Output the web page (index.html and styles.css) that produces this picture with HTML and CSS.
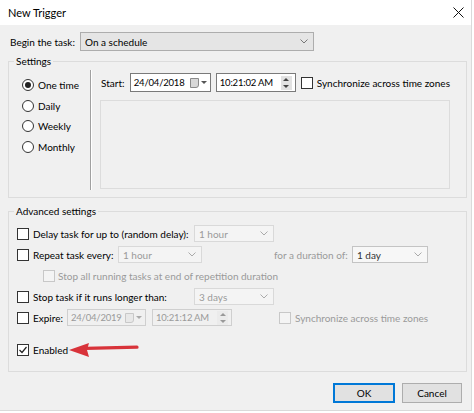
FILE: index.html
```html
<!DOCTYPE html>
<html lang="en">
<head>
    <meta charset="UTF-8">
    <title>New Trigger</title>
    <link rel="stylesheet" href="styles.css">
</head>
<body>
    <div class="dialog">
        <div class="titlebar">
            <span class="title">New Trigger</span>
            <svg class="close" width="11" height="11" viewBox="0 0 11 11"><path d="M0.5 0.5 L10.5 10.5 M10.5 0.5 L0.5 10.5" stroke="#111" stroke-width="1"/></svg>
        </div>

        <div class="content">
            <div class="begin-row">
                <span class="begin-label">Begin the task:</span>
                <div class="combo combo-begin">
                    <span>On a schedule</span>
                    <svg class="chev" width="8" height="5" viewBox="0 0 8 5"><path d="M0.5 0.5 L4 4 L7.5 0.5" fill="none" stroke="#777"/></svg>
                </div>
            </div>

            <fieldset class="group settings">
                <legend>Settings</legend>
                <div class="settings-body">
                    <div class="radios">
                        <div class="radio-row"><span class="radio on"></span>One time</div>
                        <div class="radio-row"><span class="radio"></span>Daily</div>
                        <div class="radio-row"><span class="radio"></span>Weekly</div>
                        <div class="radio-row"><span class="radio"></span>Monthly</div>
                    </div>
                    <div class="divider"></div>
                    <div class="schedule">
                        <div class="start-row">
                            <span class="start-label">Start:</span>
                            <div class="field date">
                                <span>24/04/2018</span>
                                <span class="cal"><span class="cal-page"></span><span class="tri"></span></span>
                            </div>
                            <div class="field time">
                                <span>10:21:02 AM</span>
                                <span class="spin"><span class="up"></span><span class="down"></span></span>
                            </div>
                            <span class="cb"></span>
                            <span class="cb-text">Synchronize across time zones</span>
                        </div>
                        <div class="panel"></div>
                    </div>
                </div>
            </fieldset>

            <fieldset class="group advanced">
                <legend>Advanced settings</legend>
                <div class="adv-body">
                    <div class="adv-row">
                        <span class="cb"></span>
                        <span class="adv-label w-long">Delay task for up to (random delay):</span>
                        <div class="combo off w-80"><span>1 hour</span><svg class="chev" width="8" height="5" viewBox="0 0 8 5"><path d="M0.5 0.5 L4 4 L7.5 0.5" fill="none" stroke="#aaa"/></svg></div>
                    </div>
                    <div class="adv-row">
                        <span class="cb"></span>
                        <span class="adv-label w-repeat">Repeat task every:</span>
                        <div class="combo off w-84"><span>1 hour</span><svg class="chev" width="8" height="5" viewBox="0 0 8 5"><path d="M0.5 0.5 L4 4 L7.5 0.5" fill="none" stroke="#aaa"/></svg></div>
                        <span class="muted duration-label">for a duration of:</span>
                        <div class="combo semi w-76"><span>1 day</span><svg class="chev" width="8" height="5" viewBox="0 0 8 5"><path d="M0.5 0.5 L4 4 L7.5 0.5" fill="none" stroke="#aaa"/></svg></div>
                    </div>
                    <div class="adv-row">
                        <span class="cb off indent"></span>
                        <span class="muted">Stop all running tasks at end of repetition duration</span>
                    </div>
                    <div class="adv-row">
                        <span class="cb"></span>
                        <span class="adv-label w-long">Stop task if it runs longer than:</span>
                        <div class="combo off w-80"><span>3 days</span><svg class="chev" width="8" height="5" viewBox="0 0 8 5"><path d="M0.5 0.5 L4 4 L7.5 0.5" fill="none" stroke="#aaa"/></svg></div>
                    </div>
                    <div class="adv-row">
                        <span class="cb"></span>
                        <span class="adv-label w-expire">Expire:</span>
                        <div class="field date off">
                            <span>24/04/2019</span>
                            <span class="cal"><span class="cal-page"></span><span class="tri"></span></span>
                        </div>
                        <div class="field time off">
                            <span>10:21:12 AM</span>
                            <span class="spin"><span class="up"></span><span class="down"></span></span>
                        </div>
                        <span class="cb off sync-cb"></span>
                        <span class="muted">Synchronize across time zones</span>
                    </div>
                    <div class="adv-row enabled-row">
                        <span class="cb checked">
                            <svg width="10" height="10" viewBox="0 0 10 10"><path d="M1.5 5 L4 7.5 L8.5 2" fill="none" stroke="#222" stroke-width="1.2"/></svg>
                        </span>
                        <span class="adv-label">Enabled</span>
                    </div>
                </div>
            </fieldset>

            <div class="buttons">
                <div class="btn default">OK</div>
                <div class="btn">Cancel</div>
            </div>
        </div>

        <!-- red annotation arrow -->
        <svg class="arrow" width="72" height="20" viewBox="0 0 72 20">
            <path d="M18 8.3 L69 7.2" stroke="#d8333a" stroke-width="3.2" stroke-linecap="round"/>
            <path d="M1 10 L21 3 L19 10 L21 17 Z" fill="#d8333a"/>
        </svg>
    </div>
</body>
</html>
```

FILE: styles.css
```css
* {
    box-sizing: border-box;
}

body {
    margin: 0;
    background: #fff;
    font-family: Lato, "Noto Sans", sans-serif;
    font-size: 10px;
    color: #000;
    white-space: nowrap;
}

.dialog {
    position: relative;
    width: 472px;
    height: 411px;
    background: #f0f0f0;
    border-right: 1px solid #dadada;
    border-bottom: 1px solid #dadada;
}

.titlebar {
    height: 25px;
    background: #fff;
    display: flex;
    align-items: center;
    justify-content: space-between;
    padding: 0 7px 0 8px;
}

.title {
    font-size: 11px;
}

.content {
    padding: 7px 0 0 8px;
}

/* begin the task */
.begin-row {
    display: flex;
    align-items: center;
    height: 19px;
}

.begin-label {
    width: 72px;
    padding-left: 2px;
}

.combo {
    height: 19px;
    border: 1px solid #adadad;
    background: #e5e5e5;
    display: flex;
    align-items: center;
    justify-content: space-between;
    padding: 0 5px 0 4px;
}

.combo-begin {
    width: 234px;
}

.combo.off {
    height: 17px;
    background: #f4f4f4;
    border-color: #d9d9d9;
    color: #9a9a9a;
}

.combo.semi {
    height: 17px;
    background: #f7f7f7;
    border-color: #c4c4c4;
    color: #333;
}

.w-80 { width: 80px; flex: none; }
.w-84 { width: 84px; flex: none; }
.w-76 { width: 76px; flex: none; }

/* group boxes */
.group {
    margin: 3px 0 0 0;
    padding: 0;
    width: 459px;
    border: 1px solid #dcdcdc;
}

.group legend {
    margin-left: 5px;
    padding: 0 2px;
    line-height: 14px;
}

.settings-body {
    display: flex;
    height: 129px;
    padding: 0 16px 0 13px;
}

.radios {
    width: 68px;
    padding-top: 7px;
}

.radio-row {
    display: flex;
    align-items: center;
    height: 20.5px;
}

.radio {
    width: 12px;
    height: 12px;
    border: 1px solid #333;
    border-radius: 50%;
    background: #fff;
    margin-right: 4px;
    display: flex;
    align-items: center;
    justify-content: center;
}

.radio.on::after {
    content: "";
    width: 6px;
    height: 6px;
    border-radius: 50%;
    background: #222;
}

.divider {
    width: 2px;
    margin: 2px 0 7px 0;
    border-left: 1px solid #a0a0a0;
    border-right: 1px solid #fff;
}

.schedule {
    margin-left: 8px;
    padding-top: 5px;
    width: 350px;
}

.start-row {
    display: flex;
    align-items: center;
    height: 19px;
}

.start-label {
    width: 30px;
    padding-left: 1px;
}

.field {
    height: 19px;
    flex: none;
    border: 1px solid #7a7a7a;
    background: #fff;
    display: flex;
    align-items: center;
    justify-content: space-between;
    padding: 0 3px 0 3px;
    font-size: 9.5px;
    letter-spacing: -0.2px;
}

.field.date {
    width: 81px;
}

.field.time {
    width: 80px;
    margin-left: 5px;
}

.field.off {
    height: 17px;
    border-color: #cfcfcf;
    background: #f0f0f0;
    color: #9a9a9a;
}

.field.off.date {
    width: 79px;
}

.field.off.time {
    margin-left: 6px;
}

.cal {
    display: flex;
    align-items: center;
    gap: 2px;
}

.cal-page {
    width: 9px;
    height: 10px;
    border: 1px solid #8a8a8a;
    background: #d8d8d8;
    border-radius: 0 0 3px 0;
}

.tri {
    width: 0;
    height: 0;
    border-left: 3px solid transparent;
    border-right: 3px solid transparent;
    border-top: 3px solid #555;
}

.field.off .cal-page {
    border-color: #c8c8c8;
    background: #e8e8e8;
}

.field.off .tri {
    border-top-color: #aaa;
}

.spin {
    width: 11px;
    height: 14px;
    background: #e2e2e2;
    display: flex;
    flex-direction: column;
    align-items: center;
    justify-content: space-around;
}

.spin .up {
    border-left: 3px solid transparent;
    border-right: 3px solid transparent;
    border-bottom: 3px solid #444;
}

.spin .down {
    border-left: 3px solid transparent;
    border-right: 3px solid transparent;
    border-top: 3px solid #444;
}

.field.off .spin {
    background: #ebebeb;
}

.field.off .spin .up {
    border-bottom-color: #999;
}

.field.off .spin .down {
    border-top-color: #999;
}

.cb {
    width: 12px;
    height: 12px;
    flex: none;
    border: 1px solid #333;
    background: #fff;
    display: flex;
    align-items: center;
    justify-content: center;
}

.start-row .cb {
    margin-left: 5px;
}

.cb-text {
    margin-left: 4px;
}

.cb.off {
    border-color: #c8c8c8;
    background: #f4f4f4;
}

.panel {
    margin-top: 8px;
    height: 89px;
    border: 1px solid #dcdcdc;
}

/* advanced */
.advanced {
    margin-top: 6px;
}

.adv-body {
    padding: 5px 0 11px 8px;
}

.adv-row {
    display: flex;
    align-items: center;
    height: 21px;
}

.adv-label {
    margin-left: 4px;
    flex: none;
}

.w-long { width: 161px; }
.w-repeat { width: 85px; }
.w-expire { width: 34px; }

.muted {
    color: #9a9a9a;
}

.duration-label {
    margin-left: 72px;
    width: 78px;
}

.cb.indent {
    margin-left: 26px;
    margin-right: 3px;
}

.sync-cb {
    margin-left: 47px;
    margin-right: 4px;
}

.enabled-row {
    margin-top: 11px;
}

/* buttons */
.buttons {
    width: 459px;
    display: flex;
    justify-content: flex-end;
    gap: 7px;
    padding-right: 5px;
    margin-top: 11px;
}

.btn {
    height: 20px;
    width: 60px;
    background: #e1e1e1;
    border: 1px solid #adadad;
    display: flex;
    align-items: center;
    justify-content: center;
}

.btn.default {
    width: 62px;
    border: 2px solid #0078d7;
}

.arrow {
    position: absolute;
    left: 68px;
    top: 340px;
}
```
